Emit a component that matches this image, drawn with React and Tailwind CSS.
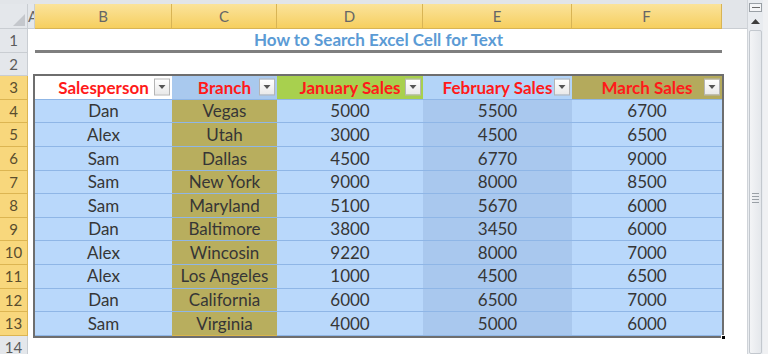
import React from "react";

const cols = [
  { key: "B", w: "w-[137px]" },
  { key: "C", w: "w-[105px]" },
  { key: "D", w: "w-[146px]" },
  { key: "E", w: "w-[149px]" },
  { key: "F", w: "w-[150px]" },
];

const headers = [
  { label: "Salesperson", w: "w-[137px]", bg: "bg-white" },
  { label: "Branch", w: "w-[105px]", bg: "bg-[#a9c9ee]" },
  { label: "January Sales", w: "w-[146px]", bg: "bg-[#a8d04e]" },
  { label: "February Sales", w: "w-[149px]", bg: "bg-[#b3d4f8]" },
  { label: "March Sales", w: "w-[150px]", bg: "bg-[#b4aa5c]" },
];

const bodyBg = [
  "bg-[#b9d8fb]",
  "bg-[#b8ae5e]",
  "bg-[#b9d8fb]",
  "bg-[#a9c8ee]",
  "bg-[#b9d8fb]",
];

const rows = [
  ["Dan", "Vegas", "5000", "5500", "6700"],
  ["Alex", "Utah", "3000", "4500", "6500"],
  ["Sam", "Dallas", "4500", "6770", "9000"],
  ["Sam", "New York", "9000", "8000", "8500"],
  ["Sam", "Maryland", "5100", "5670", "6000"],
  ["Dan", "Baltimore", "3800", "3450", "6000"],
  ["Alex", "Wincosin", "9220", "8000", "7000"],
  ["Alex", "Los Angeles", "1000", "4500", "6500"],
  ["Dan", "California", "6000", "6500", "7000"],
  ["Sam", "Virginia", "4000", "5000", "6000"],
];

function clsxLite(...a) {
  return a.filter(Boolean).join(" ");
}

function RowHead({ n, selected }) {
  return (
    <div
      className={clsxLite(
        "w-[28px] h-[23.6px] shrink-0 flex items-center justify-center text-[15px] border-b border-r",
        selected
          ? "bg-[#f8d77c] border-[#dcb552] text-[#5a4d2e]"
          : "bg-[#e4e7eb] border-[#c9cdd2] text-[#5b5b5b]"
      )}
    >
      {n}
    </div>
  );
}

function Dropdown() {
  return (
    <div className="absolute right-[2px] top-1/2 -translate-y-1/2 w-[16px] h-[17px] bg-gradient-to-b from-white to-[#e9e9e9] border border-[#b5b5b5] flex items-center justify-center">
      <svg width="8" height="5" viewBox="0 0 8 5">
        <path d="M0.5 0.5 L7.5 0.5 L4 4.5 Z" fill="#555" />
      </svg>
    </div>
  );
}

export default function App() {
  return (
    <div
      className="w-[768px] h-[354px] overflow-hidden bg-white flex"
      style={{ fontFamily: "Lato, 'Open Sans', sans-serif" }}
    >
      <div className="w-[747px] flex flex-col">
        {/* column headers */}
        <div className="h-[4px] shrink-0 bg-[#e2e5e9]" />
        <div className="flex h-[25px] shrink-0">
          <div className="w-[28px] bg-[#e4e7eb] border-r border-b border-[#c9cdd2] relative">
            <svg className="absolute right-[2px] bottom-[2px]" width="12" height="12" viewBox="0 0 12 12">
              <path d="M12 0 L12 12 L0 12 Z" fill="#c4c7cc" />
            </svg>
          </div>
          <div className="w-[7px] bg-[#e4e7eb] border-r border-b border-[#c9cdd2] overflow-hidden text-[15px] text-[#666] leading-[24px]">
            A
          </div>
          {cols.map((c) => (
            <div
              key={c.key}
              className={clsxLite(
                c.w,
                "bg-gradient-to-b from-[#fbe39a] to-[#f6cf5e] border-r border-b border-[#d8b455] flex items-center justify-center text-[15px] text-[#666]"
              )}
            >
              {c.key}
            </div>
          ))}
          <div className="flex-1 bg-[#e2e5e9] border-b border-[#c9cdd2]" />
        </div>

        {/* row 1 */}
        <div className="flex shrink-0">
          <RowHead n={1} />
          <div className="w-[7px]" />
          <div className="w-[687px] h-[23.6px] border-b-[3px] border-[#7f7f7f] flex items-center justify-center text-[17px] font-bold text-[#5b9bd5]">
            How to Search Excel Cell for Text
          </div>
        </div>
        {/* row 2 */}
        <div className="flex shrink-0">
          <RowHead n={2} />
        </div>

        {/* table rows 3-13 */}
        <div className="flex shrink-0">
          <div className="flex flex-col">
            {Array.from({ length: 11 }, (_, i) => (
              <RowHead key={i} n={i + 3} selected />
            ))}
          </div>
          <div className="w-[7px]" />
          <div className="relative w-[687px] flex flex-col shadow-[0_0_0_2px_#6e6e6e]">
            <div className="flex h-[23.6px]">
              {headers.map((h) => (
                <div
                  key={h.label}
                  className={clsxLite(
                    h.w,
                    h.bg,
                    "relative flex items-center justify-center text-[17px] font-bold text-[#ff1a1a] border-b border-[#8fb6e6] whitespace-nowrap"
                  )}
                >
                  {h.label}
                  <Dropdown />
                </div>
              ))}
            </div>
            {rows.map((r, ri) => (
              <div key={ri} className="flex h-[23.6px]">
                {r.map((v, ci) => (
                  <div
                    key={ci}
                    className={clsxLite(
                      cols[ci].w,
                      bodyBg[ci],
                      "flex items-center justify-center text-[17px] text-[#363636] border-b",
                      ci === 1 && ri === rows.length - 1 ? "border-[#d9b54a]" : "border-[#8fb6e6]"
                    )}
                  >
                    {v}
                  </div>
                ))}
              </div>
            ))}
            <div className="absolute right-[-4px] bottom-[-4px] w-[5px] h-[5px] bg-black border border-white" />
          </div>
        </div>
        {/* row 14 */}
        <div className="flex shrink-0">
          <RowHead n={14} />
        </div>
      </div>

      {/* vertical scrollbar */}
      <div className="w-[21px] flex">
        <div className="w-[16px] flex flex-col bg-[#e9ecf0] border-l border-[#cfd3d8]">
          <div className="h-[3px] shrink-0" />
          <div className="mx-[1px] h-[9px] shrink-0 border border-[#9aa0a6] bg-[#f4f5f7] flex items-center justify-center">
            <div className="w-[8px] h-px bg-[#6b6b6b]" />
          </div>
          <div className="h-[18px] shrink-0 flex items-center justify-center">
            <svg width="9" height="5" viewBox="0 0 9 5">
              <path d="M0 5 L9 5 L4.5 0 Z" fill="#3d3d3d" />
            </svg>
          </div>
          <div className="flex-1 mx-[1px] border border-[#c3c8ce] bg-gradient-to-r from-[#f3f4f6] to-[#e4e7eb] rounded-[2px] flex items-start justify-center pt-[162px]">
            <div className="flex flex-col gap-[2px]">
              <div className="w-[7px] h-px bg-[#9aa0a6]" />
              <div className="w-[7px] h-px bg-[#9aa0a6]" />
              <div className="w-[7px] h-px bg-[#9aa0a6]" />
              <div className="w-[7px] h-px bg-[#9aa0a6]" />
            </div>
          </div>
        </div>
        <div className="flex-1 bg-[#f0f1f3]" />
      </div>
    </div>
  );
}
